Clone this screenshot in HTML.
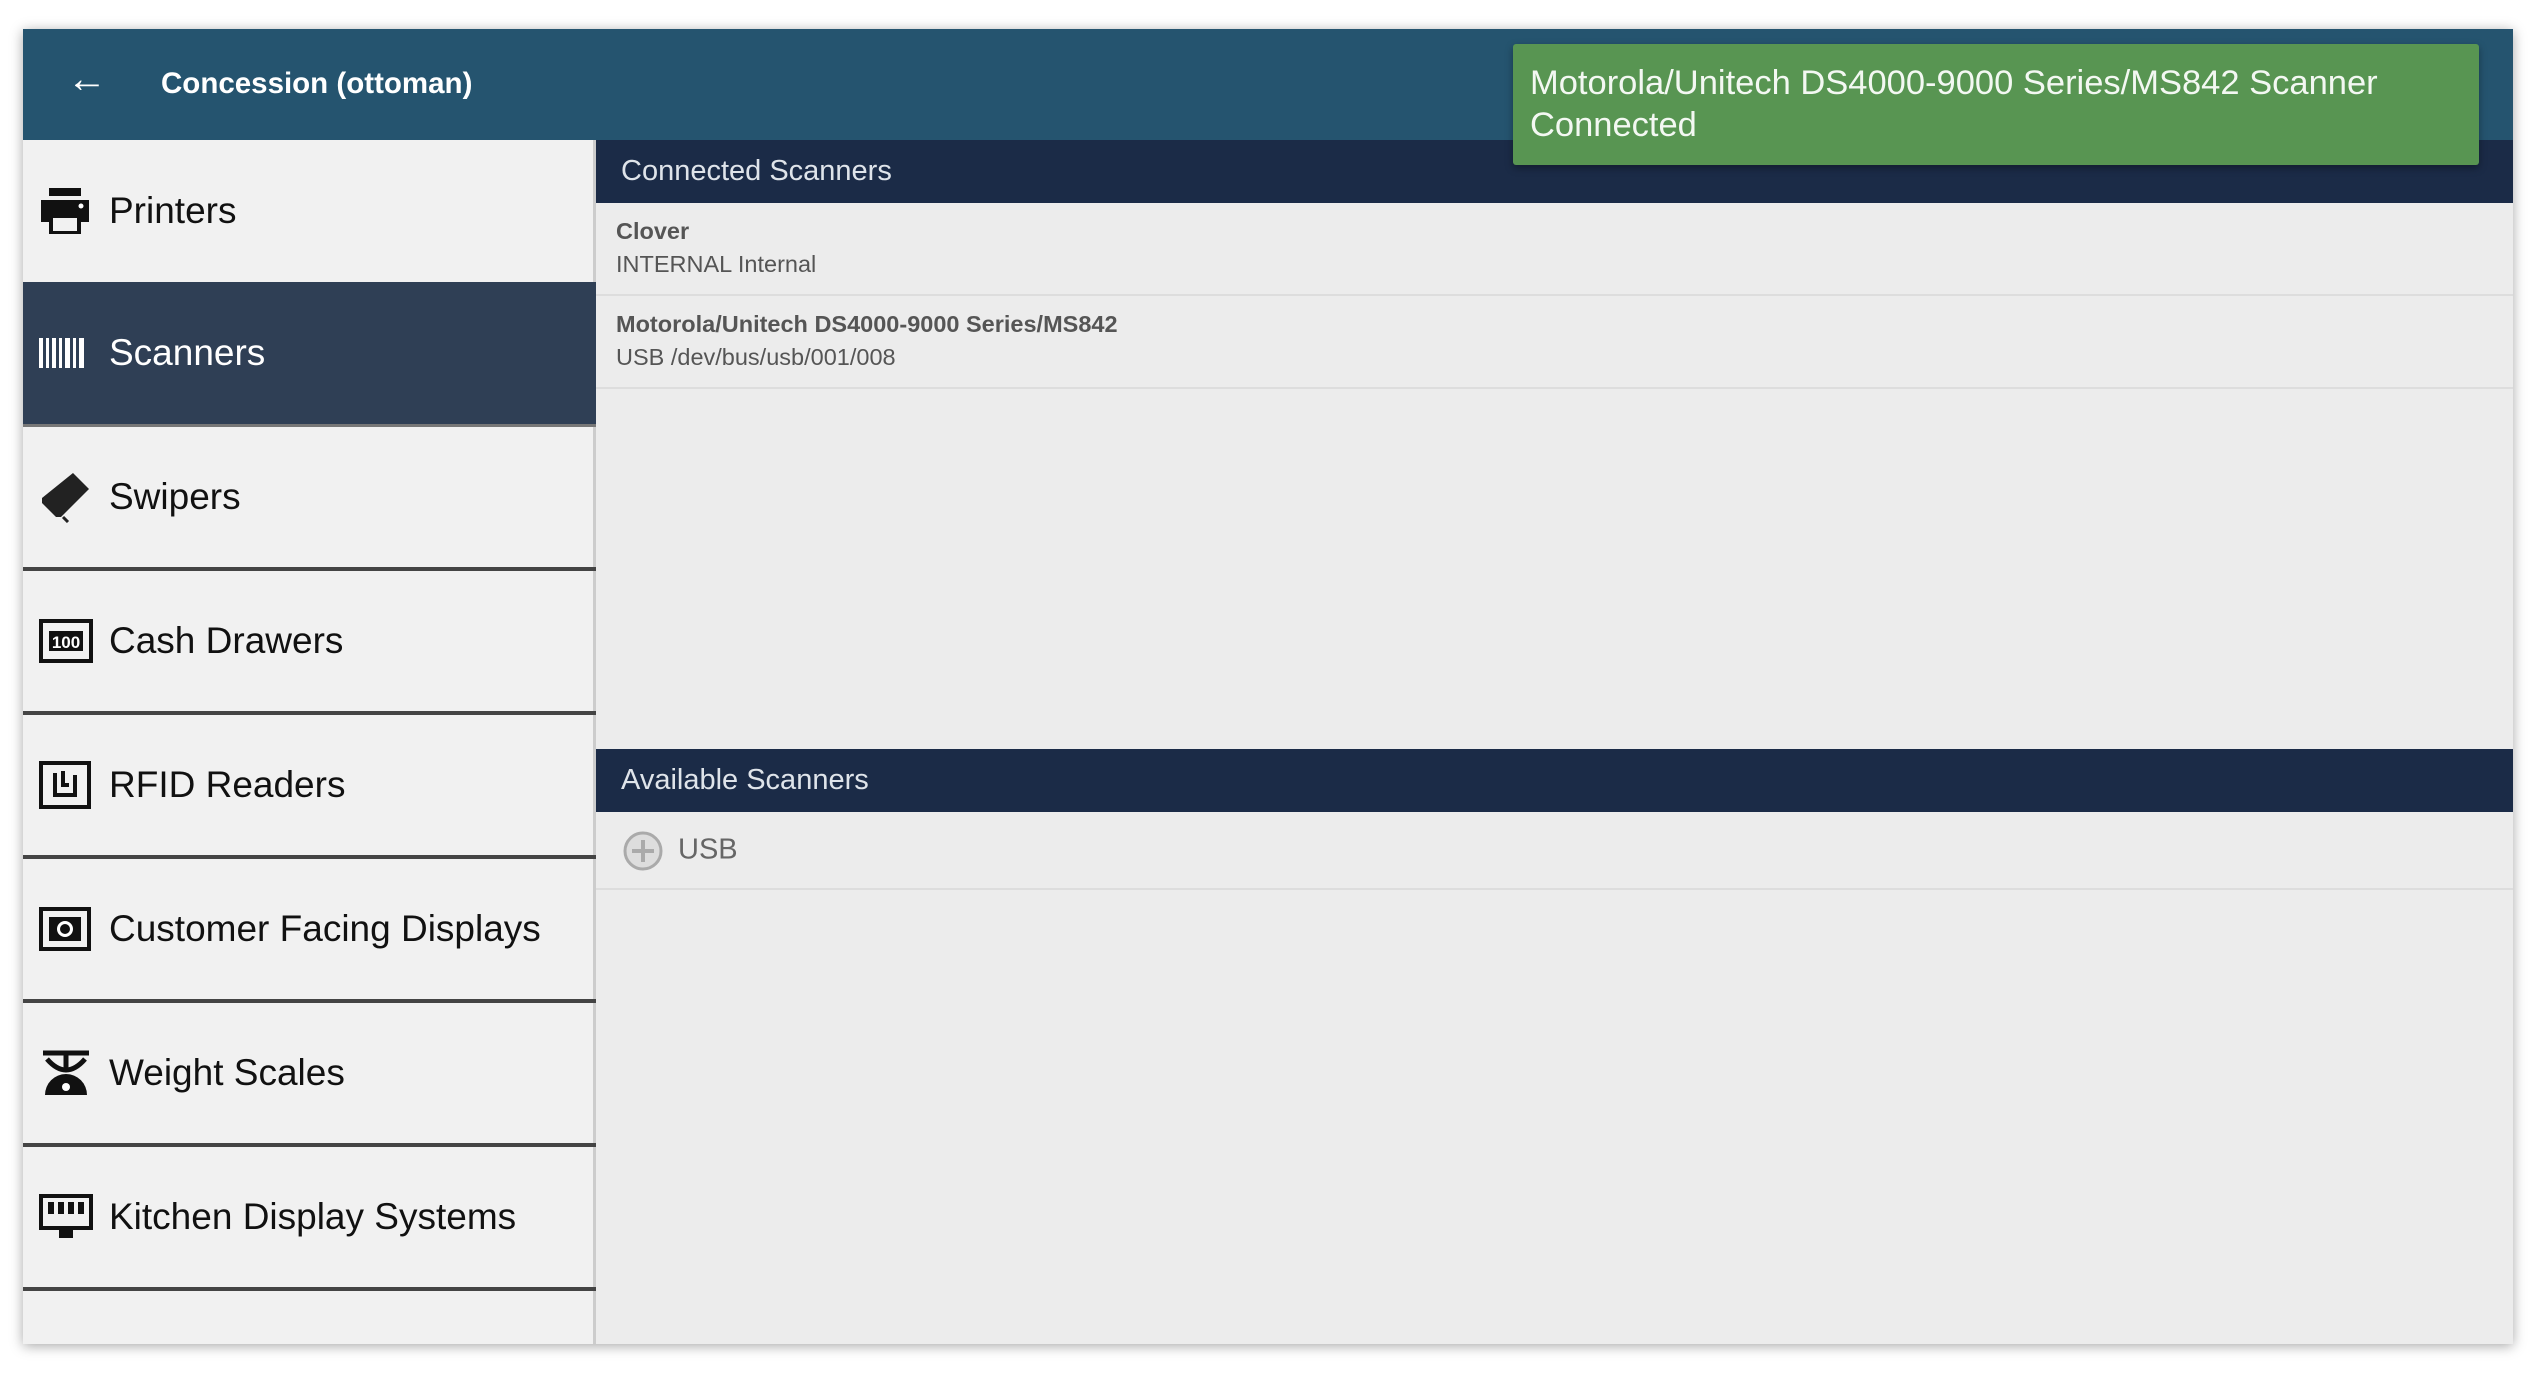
<!DOCTYPE html>
<html><head><style>
*{margin:0;padding:0;box-sizing:border-box}
body{width:2546px;height:1382px;background:#fff;font-family:"Liberation Sans",sans-serif;position:relative;overflow:hidden}
.frame{position:absolute;left:23px;top:29px;width:2490px;height:1315px;background:#ececec;box-shadow:0 2px 12px rgba(0,0,0,.35)}
.top{position:absolute;left:0;top:0;width:100%;height:111px;background:#25546f}
.top .t{position:absolute;left:138px;top:38px;color:#fff;font-weight:bold;font-size:29.5px}
.top .b{position:absolute;left:44px;top:28px;color:#fff;font-size:40px}
.side{position:absolute;left:0;top:111px;width:573px;height:1204px;background:#f1f1f1;border-right:3px solid #ccc}
.row{position:absolute;left:0;width:573px;height:144px;border-bottom:4px solid #444;font-size:37px;color:#111}
.row span{position:absolute;left:86px;top:50%;transform:translateY(-50%)}
.row svg{position:absolute;left:16px;top:50%;transform:translateY(-50%)}
.sel{background:#2f3f55;color:#fff}
.sh{position:absolute;left:573px;width:1917px;height:63px;background:#1b2b47;color:#dfe4ea;font-size:29px;padding:15px 0 0 25px}
.it{position:absolute;left:573px;width:1917px;height:93px;border-bottom:2px solid #ddd;padding:15px 0 0 20px;color:#555}
.it b{display:block;font-size:23.5px;margin-bottom:6px;color:#555}
.it div{font-size:23.5px}
.toast{position:absolute;left:1513px;top:44px;width:966px;height:121px;background:#589552;color:#f3f8f2;font-size:34.5px;line-height:42px;padding:18px 17px;border-radius:3px;box-shadow:0 3px 8px rgba(0,0,0,.35)}
</style></head><body>
<div class="frame">
<div class="top"><div class="b">&#8592;</div><div class="t">Concession (ottoman)</div></div>
<div class="side">
<div class="row" style="top:0;border-bottom:none;height:142px"><svg width="52" height="46" viewBox="0 0 52 46"><rect x="10" y="0" width="32" height="8" fill="#111"/><path d="M2 12h48v22h-8v-8H10v8H2z" fill="#111"/><rect x="12" y="28" width="28" height="17" fill="none" stroke="#111" stroke-width="4"/><circle cx="42" cy="18" r="2.5" fill="#fff"/></svg><span>Printers</span></div>
<div class="row sel" style="top:142px;height:145px;border-bottom:3px solid #777"><svg width="50" height="30" viewBox="0 0 50 30" fill="#fff"><rect x="0" width="4" height="30"/><rect x="7" width="3" height="30"/><rect x="13" width="4" height="30"/><rect x="20" width="3" height="30"/><rect x="26" width="5" height="30"/><rect x="34" width="3" height="30"/><rect x="40" width="5" height="30"/></svg><span>Scanners</span></div>
<div class="row" style="top:287px;height:144px"><svg width="52" height="52" viewBox="0 0 52 52"><path d="M34 2l16 16-28 28-5 0-14-14 0-5z" fill="#222"/><path d="M24 46l5 5" stroke="#222" stroke-width="3"/></svg><span>Swipers</span></div>
<div class="row" style="top:431px"><svg width="54" height="44" viewBox="0 0 54 44"><rect x="2" y="2" width="50" height="40" fill="none" stroke="#111" stroke-width="4"/><rect x="10" y="12" width="34" height="20" fill="#111"/><text x="27" y="29" font-size="17" font-weight="bold" fill="#fff" text-anchor="middle" font-family="Liberation Sans">100</text></svg><span>Cash Drawers</span></div>
<div class="row" style="top:575px"><svg width="52" height="48" viewBox="0 0 52 48"><rect x="2" y="2" width="48" height="44" fill="none" stroke="#111" stroke-width="4"/><path d="M16 12v22h20V14M24 10v14h6" fill="none" stroke="#111" stroke-width="4"/></svg><span>RFID Readers</span></div>
<div class="row" style="top:719px"><svg width="52" height="44" viewBox="0 0 52 44"><rect x="2" y="2" width="48" height="40" fill="none" stroke="#111" stroke-width="4"/><rect x="10" y="10" width="32" height="24" fill="#111"/><circle cx="26" cy="22" r="8" fill="#fff"/><circle cx="26" cy="22" r="5" fill="#111"/></svg><span>Customer Facing Displays</span></div>
<div class="row" style="top:863px"><svg width="54" height="48" viewBox="0 0 54 48"><path d="M4 4h46M27 4v16M8 10q19 22 38 0" fill="none" stroke="#111" stroke-width="5"/><path d="M6 46a21 21 0 0 1 42 0z" fill="#111"/><circle cx="27" cy="38" r="4" fill="#fff"/></svg><span>Weight Scales</span></div>
<div class="row" style="top:1007px"><svg width="54" height="46" viewBox="0 0 54 46"><rect x="2" y="2" width="50" height="32" fill="none" stroke="#111" stroke-width="4"/><rect x="9" y="8" width="6" height="12" fill="#111"/><rect x="19" y="8" width="6" height="12" fill="#111"/><rect x="29" y="8" width="6" height="12" fill="#111"/><rect x="39" y="8" width="6" height="12" fill="#111"/><rect x="20" y="36" width="14" height="8" fill="#111"/></svg><span>Kitchen Display Systems</span></div>
</div>
<div class="sh" style="top:111px">Connected Scanners</div>
<div class="it" style="top:174px"><b>Clover</b><div>INTERNAL Internal</div></div>
<div class="it" style="top:267px"><b>Motorola/Unitech DS4000-9000 Series/MS842</b><div>USB /dev/bus/usb/001/008</div></div>
<div class="sh" style="top:720px">Available Scanners</div>
<div class="it" style="top:783px;height:78px;padding:18px 0 0 26px;font-size:29px;color:#666"><svg width="42" height="42" viewBox="0 0 42 42" style="vertical-align:middle;margin-right:14px"><circle cx="21" cy="21" r="18" fill="#ddd" stroke="#aaa" stroke-width="3"/><path d="M21 10v22M10 21h22" stroke="#aaa" stroke-width="4"/></svg>USB</div>
</div>
<div class="toast">Motorola/Unitech DS4000-9000 Series/MS842 Scanner<br>Connected</div>
</body></html>
